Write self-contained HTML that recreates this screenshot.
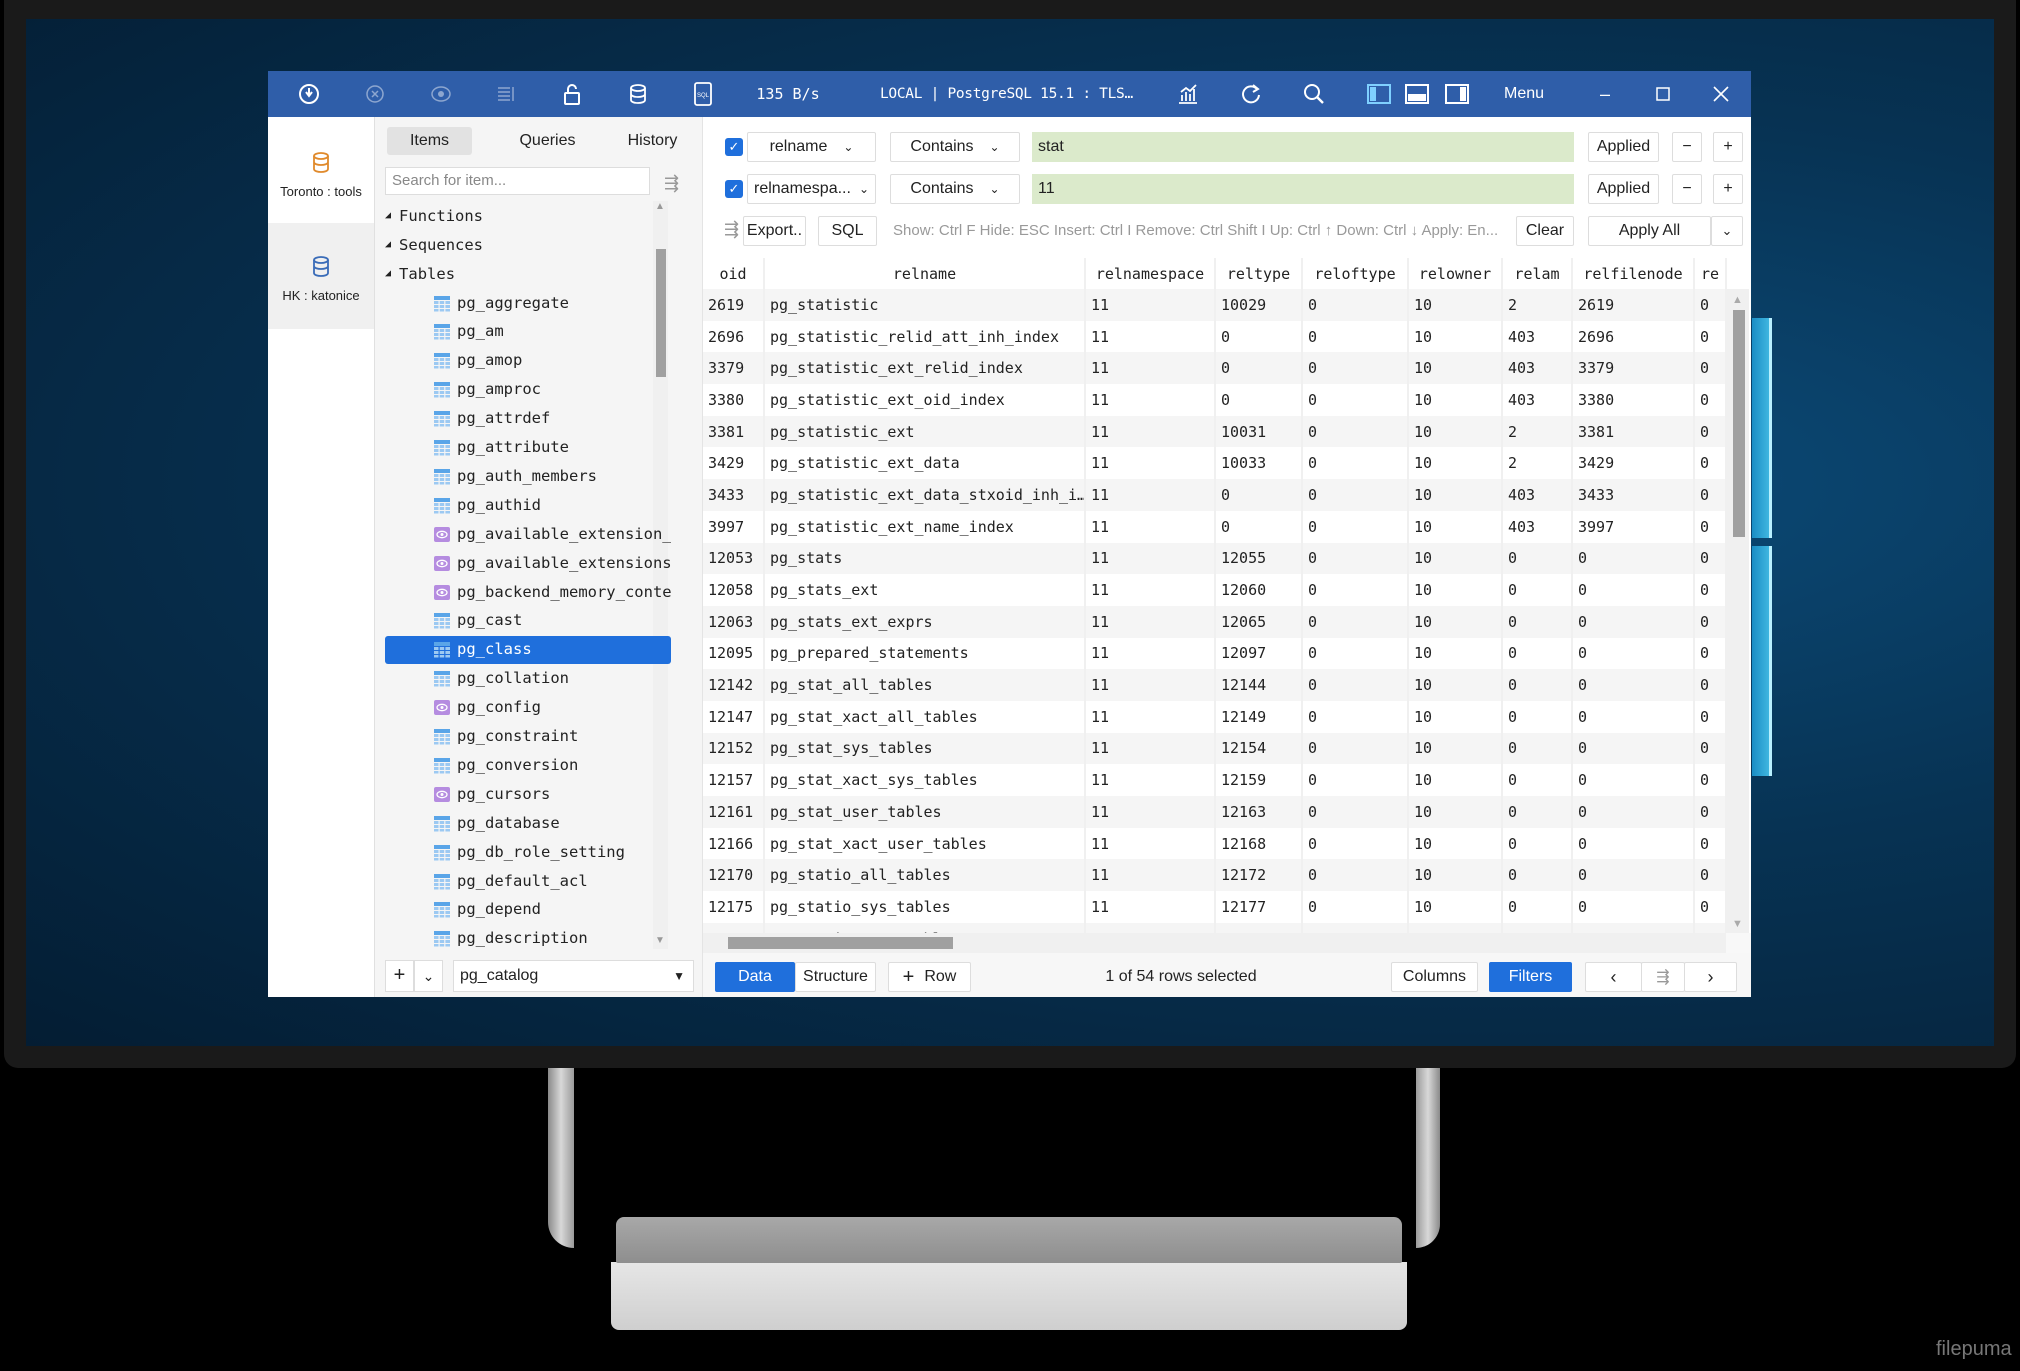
<!DOCTYPE html>
<html><head><meta charset="utf-8">
<style>
*{box-sizing:border-box;margin:0;padding:0}
body{width:2020px;height:1371px;background:#000;position:relative;overflow:hidden;font-family:"Liberation Sans","DejaVu Sans",sans-serif;color:#222}
.a{position:absolute}
.mono{font-family:"DejaVu Sans Mono","Liberation Mono",monospace}
.btn{position:absolute;background:#fff;border:1px solid #ddd;border-radius:2px;display:flex;align-items:center;justify-content:center;font-size:16px;color:#222;white-space:nowrap}
.ti{position:absolute;top:0;height:46px;display:flex;align-items:center;justify-content:center;color:#fff;white-space:nowrap}
.tree{position:absolute;left:0;font-size:15.5px;height:29px;display:flex;align-items:center;white-space:nowrap}
.ico{width:18px;height:18px;margin-right:6px;display:inline-block}
table{border-collapse:collapse;table-layout:fixed;font-family:"DejaVu Sans Mono","Liberation Mono",monospace;font-size:15px}
td,th{height:31.7px;padding:0 5px;white-space:nowrap;overflow:hidden;text-align:left;border-right:2px solid #f0f0f0;font-weight:normal}
th{height:31px;background:#fff;text-align:center}
tbody tr:nth-child(odd) td{background:#f5f5f5}
tbody tr:nth-child(even) td{background:#fff}
</style></head><body>
<!-- monitor -->
<div class="a" style="left:4px;top:0;width:2012px;height:1068px;background:#1a1a1a;border-radius:0 0 14px 14px"></div>
<div class="a" style="left:26px;top:19px;width:1968px;height:1027px;background:radial-gradient(ellipse at 75% 45%,#0c4c7a 0%,#073354 45%,#041d33 100%)"></div>
<div class="a" style="left:1752px;top:318px;width:20px;height:220px;background:linear-gradient(90deg,#1a8cc4,#3fb6e0);border-right:3px solid #b8f0ff"></div>
<div class="a" style="left:1752px;top:546px;width:20px;height:230px;background:linear-gradient(90deg,#1a8cc4,#3fb6e0);border-right:3px solid #b8f0ff"></div>
<!-- stand -->
<div class="a" style="left:548px;top:1068px;width:26px;height:180px;background:linear-gradient(90deg,#8a8a8a,#d8d8d8,#9a9a9a);border-radius:0 0 0 30px"></div>
<div class="a" style="left:1416px;top:1068px;width:24px;height:180px;background:linear-gradient(90deg,#9a9a9a,#d8d8d8,#8a8a8a);border-radius:0 0 30px 0"></div>
<div class="a" style="left:611px;top:1262px;width:796px;height:68px;background:linear-gradient(180deg,#e6e6e6,#cfcfcf);border-radius:0 0 8px 8px"></div>
<div class="a" style="left:616px;top:1217px;width:786px;height:46px;background:linear-gradient(180deg,#a8a8a8,#8e8e8e);border-radius:8px 8px 2px 2px"></div>
<div class="a" style="left:1936px;top:1338px;color:#777;font-size:20px">filepuma</div>

<!-- window -->
<div class="a" style="left:268px;top:71px;width:1483px;height:926px;background:#fff;overflow:hidden">
 <div class="a" style="left:0;top:0;width:1483px;height:46px;background:#2f5ea9"></div>
 <div class="ti" style="left:24px;width:34px"><svg width="22" height="22" viewBox="0 0 22 22"><circle cx="11" cy="11" r="9" fill="none" stroke="#fff" stroke-width="2"/><path d="M11 5v8M8 9l3 4 3-4" stroke="#fff" stroke-width="2" fill="none"/></svg></div>
 <div class="ti" style="left:90px;width:34px;opacity:.45"><svg width="20" height="20"><circle cx="10" cy="10" r="8" fill="none" stroke="#fff" stroke-width="1.5"/><path d="M7 7l6 6M13 7l-6 6" stroke="#fff" stroke-width="1.5"/></svg></div>
 <div class="ti" style="left:156px;width:34px;opacity:.45"><svg width="22" height="20"><ellipse cx="11" cy="10" rx="9" ry="7" fill="none" stroke="#fff" stroke-width="1.5"/><circle cx="11" cy="10" r="3" fill="#fff"/></svg></div>
 <div class="ti" style="left:221px;width:34px;opacity:.45"><svg width="20" height="20"><path d="M2 4h12M2 8h12M2 12h12M2 16h12M17 3v14" stroke="#fff" stroke-width="1.5"/></svg></div>
 <div class="ti" style="left:287px;width:34px"><svg width="18" height="22"><rect x="2" y="10" width="14" height="11" rx="1" fill="none" stroke="#fff" stroke-width="2"/><path d="M5 10V6a4 4 0 0 1 8 0" fill="none" stroke="#fff" stroke-width="2"/></svg></div>
 <div class="ti" style="left:353px;width:34px"><svg width="20" height="22"><ellipse cx="10" cy="5" rx="7" ry="3" fill="none" stroke="#fff" stroke-width="1.8"/><path d="M3 5v12c0 4 14 4 14 0V5M3 11c0 4 14 4 14 0" fill="none" stroke="#fff" stroke-width="1.8"/></svg></div>
 <div class="ti" style="left:418px;width:34px"><svg width="18" height="24"><rect x="1" y="1" width="16" height="22" rx="2" fill="none" stroke="#fff" stroke-width="1.8"/><text x="9" y="15" font-size="6" fill="#fff" text-anchor="middle" font-family="Liberation Sans">SQL</text></svg></div>
 <div class="ti mono" style="left:480px;width:80px;font-size:15px">135 B/s</div>
 <div class="ti mono" style="left:612px;width:280px;font-size:14.5px;justify-content:flex-start;letter-spacing:-0.3px">LOCAL | PostgreSQL 15.1 : TLS…</div>
 <div class="ti" style="left:903px;width:34px"><svg width="22" height="22"><path d="M2 20h18M5 18v-6M9 18v-9M13 18v-7M17 18V6M4 9l5-4 4 3 6-6" stroke="#fff" stroke-width="1.8" fill="none"/></svg></div>
 <div class="ti" style="left:966px;width:34px"><svg width="22" height="22"><path d="M17 6a8 8 0 1 0 2 6" stroke="#fff" stroke-width="2" fill="none"/><path d="M13 2l5 4-5 3" stroke="#fff" stroke-width="2" fill="none"/></svg></div>
 <div class="ti" style="left:1029px;width:34px"><svg width="22" height="22"><circle cx="9" cy="9" r="7" stroke="#fff" stroke-width="2" fill="none"/><path d="M14 14l6 6" stroke="#fff" stroke-width="2.4"/></svg></div>
 <div class="ti" style="left:1096px;width:30px"><svg width="24" height="20"><rect x="1" y="1" width="22" height="18" fill="none" stroke="#7fd0ff" stroke-width="2"/><rect x="3" y="3" width="6" height="14" fill="#7fd0ff"/></svg></div>
 <div class="ti" style="left:1134px;width:30px"><svg width="24" height="20"><rect x="1" y="1" width="22" height="18" fill="none" stroke="#fff" stroke-width="2"/><rect x="3" y="10" width="18" height="7" fill="#fff"/></svg></div>
 <div class="ti" style="left:1174px;width:30px"><svg width="24" height="20"><rect x="1" y="1" width="22" height="18" fill="none" stroke="#fff" stroke-width="2"/><rect x="15" y="3" width="6" height="14" fill="#fff"/></svg></div>
 <div class="ti" style="left:1226px;width:60px;font-size:16px">Menu</div>
 <div class="ti" style="left:1322px;width:30px;font-size:18px">–</div>
 <div class="ti" style="left:1380px;width:30px"><svg width="14" height="14"><rect x="1" y="1" width="12" height="12" fill="none" stroke="#fff" stroke-width="1.5"/></svg></div>
 <div class="ti" style="left:1438px;width:30px"><svg width="16" height="16"><path d="M1 1l14 14M15 1L1 15" stroke="#fff" stroke-width="1.6"/></svg></div>

 <!-- conn sidebar -->
 <div class="a" style="left:0;top:46px;width:107px;height:880px;background:#fff;border-right:1px solid #e0e0e0"></div>
 <div class="a" style="left:0;top:152px;width:106px;height:106px;background:#f0f0f0"></div>
 <div class="a" style="left:0;top:80px;width:106px;text-align:center"><svg width="20" height="24"><ellipse cx="10" cy="5" rx="7" ry="3" fill="none" stroke="#e08a2c" stroke-width="1.8"/><path d="M3 5v13c0 4 14 4 14 0V5M3 11c0 4 14 4 14 0" fill="none" stroke="#e08a2c" stroke-width="1.8"/></svg><div style="font-size:13px;margin-top:4px">Toronto : tools</div></div>
 <div class="a" style="left:0;top:184px;width:106px;text-align:center"><svg width="20" height="24"><ellipse cx="10" cy="5" rx="7" ry="3" fill="none" stroke="#3a6cb8" stroke-width="1.8"/><path d="M3 5v13c0 4 14 4 14 0V5M3 11c0 4 14 4 14 0" fill="none" stroke="#3a6cb8" stroke-width="1.8"/></svg><div style="font-size:13px;margin-top:4px">HK : katonice</div></div>

 <!-- panel -->
 <div class="a" style="left:107px;top:46px;width:328px;height:880px;background:#f5f5f5;border-right:1px solid #e4e4e4">
  <div class="a" style="left:12px;top:10px;width:85px;height:28px;background:#e2e2e2;border-radius:3px;font-size:16px;display:flex;align-items:center;justify-content:center">Items</div>
  <div class="a" style="left:130px;top:10px;width:85px;height:28px;font-size:16px;display:flex;align-items:center;justify-content:center">Queries</div>
  <div class="a" style="left:235px;top:10px;width:85px;height:28px;font-size:16px;display:flex;align-items:center;justify-content:center">History</div>
  <div class="a" style="left:10px;top:50px;width:265px;height:28px;background:#fff;border:1px solid #ddd;font-size:15px;color:#888;padding-left:6px;line-height:26px">Search for item...</div>
  <div class="a" style="left:289px;top:56px;color:#999;font-size:18px">⇶</div>
  <div class="a" style="left:10px;top:84px;width:290px;height:748px;overflow:hidden">
   <div class="tree mono" style="top:0"><span style="font-size:10px;margin-right:8px">◢</span>Functions</div>
   <div class="tree mono" style="top:29px"><span style="font-size:10px;margin-right:8px">◢</span>Sequences</div>
   <div class="tree mono" style="top:58px"><span style="font-size:10px;margin-right:8px">◢</span>Tables</div>
  </div>
  <div class="a" style="left:278px;top:84px;width:15px;height:748px;background:#f0f0f0"></div>
  <div class="a" style="left:281px;top:132px;width:10px;height:128px;background:#a0a0a0"></div>
  <div class="a" style="left:280px;top:84px;font-size:10px;color:#999">▲</div>
  <div class="a" style="left:280px;top:818px;font-size:10px;color:#999">▼</div>
  <div class="a" style="left:10px;top:843px;width:29px;height:32px;background:#fff;border:1px solid #ddd;font-size:20px;text-align:center;line-height:28px">+</div>
  <div class="a" style="left:39px;top:843px;width:29px;height:32px;background:#fff;border:1px solid #ddd;font-size:14px;text-align:center;line-height:30px">⌄</div>
  <div class="a" style="left:78px;top:843px;width:241px;height:32px;background:#fff;border:1px solid #ddd;font-size:16px;padding-left:6px;line-height:30px">pg_catalog<span style="position:absolute;right:8px;font-size:12px">▼</span></div>
 </div>
 <div id="tree" class="a" style="left:117px;top:217px;width:286px;height:663px;overflow:hidden"></div>

 <!-- filters -->
 <div class="a" style="left:457px;top:67px;width:18px;height:18px;background:#1f6fdc;border-radius:3px;color:#fff;font-size:13px;text-align:center;line-height:18px">✓</div>
 <div class="btn" style="left:479px;top:61px;width:129px;height:30px">relname<span style="margin-left:16px;font-size:12px">⌄</span></div>
 <div class="btn" style="left:622px;top:61px;width:130px;height:30px">Contains<span style="margin-left:16px;font-size:12px">⌄</span></div>
 <div class="a" style="left:764px;top:61px;width:542px;height:30px;background:#dbeacb;font-size:16px;padding-left:6px;line-height:30px">stat</div>
 <div class="btn" style="left:1320px;top:61px;width:71px;height:30px">Applied</div>
 <div class="btn" style="left:1404px;top:61px;width:30px;height:30px">−</div>
 <div class="btn" style="left:1445px;top:61px;width:30px;height:30px">+</div>

 <div class="a" style="left:457px;top:109px;width:18px;height:18px;background:#1f6fdc;border-radius:3px;color:#fff;font-size:13px;text-align:center;line-height:18px">✓</div>
 <div class="btn" style="left:479px;top:103px;width:129px;height:30px">relnamespa...<span style="margin-left:8px;font-size:12px">⌄</span></div>
 <div class="btn" style="left:622px;top:103px;width:130px;height:30px">Contains<span style="margin-left:16px;font-size:12px">⌄</span></div>
 <div class="a" style="left:764px;top:103px;width:542px;height:30px;background:#dbeacb;font-size:16px;padding-left:6px;line-height:30px">11</div>
 <div class="btn" style="left:1320px;top:103px;width:71px;height:30px">Applied</div>
 <div class="btn" style="left:1404px;top:103px;width:30px;height:30px">−</div>
 <div class="btn" style="left:1445px;top:103px;width:30px;height:30px">+</div>

 <div class="a" style="left:456px;top:148px;color:#999;font-size:18px">⇶</div>
 <div class="btn" style="left:475px;top:145px;width:63px;height:30px">Export..</div>
 <div class="btn" style="left:550px;top:145px;width:59px;height:30px">SQL</div>
 <div class="a" style="left:625px;top:145px;width:612px;height:30px;line-height:30px;font-size:15px;color:#999;white-space:nowrap;overflow:hidden">Show: Ctrl F Hide: ESC Insert: Ctrl I Remove: Ctrl Shift I Up: Ctrl ↑ Down: Ctrl ↓ Apply: En...</div>
 <div class="btn" style="left:1248px;top:145px;width:58px;height:30px">Clear</div>
 <div class="btn" style="left:1320px;top:145px;width:123px;height:30px">Apply All</div>
 <div class="btn" style="left:1443px;top:145px;width:32px;height:30px;font-size:13px">⌄</div>

 <!-- grid -->
 <div class="a" style="left:435px;top:187px;width:1048px;height:675px;overflow:hidden;background:#fff">
 <table style="width:1023px">
 <colgroup><col style="width:61px"><col style="width:321px"><col style="width:130px"><col style="width:87px"><col style="width:106px"><col style="width:94px"><col style="width:70px"><col style="width:122px"><col style="width:32px"></colgroup>
 <thead><tr><th>oid</th><th>relname</th><th>relnamespace</th><th>reltype</th><th>reloftype</th><th>relowner</th><th>relam</th><th>relfilenode</th><th>re</th></tr></thead>
 <tbody>
 <tr><td>2619</td><td>pg_statistic</td><td>11</td><td>10029</td><td>0</td><td>10</td><td>2</td><td>2619</td><td>0</td></tr>
 <tr><td>2696</td><td>pg_statistic_relid_att_inh_index</td><td>11</td><td>0</td><td>0</td><td>10</td><td>403</td><td>2696</td><td>0</td></tr>
 <tr><td>3379</td><td>pg_statistic_ext_relid_index</td><td>11</td><td>0</td><td>0</td><td>10</td><td>403</td><td>3379</td><td>0</td></tr>
 <tr><td>3380</td><td>pg_statistic_ext_oid_index</td><td>11</td><td>0</td><td>0</td><td>10</td><td>403</td><td>3380</td><td>0</td></tr>
 <tr><td>3381</td><td>pg_statistic_ext</td><td>11</td><td>10031</td><td>0</td><td>10</td><td>2</td><td>3381</td><td>0</td></tr>
 <tr><td>3429</td><td>pg_statistic_ext_data</td><td>11</td><td>10033</td><td>0</td><td>10</td><td>2</td><td>3429</td><td>0</td></tr>
 <tr><td>3433</td><td>pg_statistic_ext_data_stxoid_inh_i…</td><td>11</td><td>0</td><td>0</td><td>10</td><td>403</td><td>3433</td><td>0</td></tr>
 <tr><td>3997</td><td>pg_statistic_ext_name_index</td><td>11</td><td>0</td><td>0</td><td>10</td><td>403</td><td>3997</td><td>0</td></tr>
 <tr><td>12053</td><td>pg_stats</td><td>11</td><td>12055</td><td>0</td><td>10</td><td>0</td><td>0</td><td>0</td></tr>
 <tr><td>12058</td><td>pg_stats_ext</td><td>11</td><td>12060</td><td>0</td><td>10</td><td>0</td><td>0</td><td>0</td></tr>
 <tr><td>12063</td><td>pg_stats_ext_exprs</td><td>11</td><td>12065</td><td>0</td><td>10</td><td>0</td><td>0</td><td>0</td></tr>
 <tr><td>12095</td><td>pg_prepared_statements</td><td>11</td><td>12097</td><td>0</td><td>10</td><td>0</td><td>0</td><td>0</td></tr>
 <tr><td>12142</td><td>pg_stat_all_tables</td><td>11</td><td>12144</td><td>0</td><td>10</td><td>0</td><td>0</td><td>0</td></tr>
 <tr><td>12147</td><td>pg_stat_xact_all_tables</td><td>11</td><td>12149</td><td>0</td><td>10</td><td>0</td><td>0</td><td>0</td></tr>
 <tr><td>12152</td><td>pg_stat_sys_tables</td><td>11</td><td>12154</td><td>0</td><td>10</td><td>0</td><td>0</td><td>0</td></tr>
 <tr><td>12157</td><td>pg_stat_xact_sys_tables</td><td>11</td><td>12159</td><td>0</td><td>10</td><td>0</td><td>0</td><td>0</td></tr>
 <tr><td>12161</td><td>pg_stat_user_tables</td><td>11</td><td>12163</td><td>0</td><td>10</td><td>0</td><td>0</td><td>0</td></tr>
 <tr><td>12166</td><td>pg_stat_xact_user_tables</td><td>11</td><td>12168</td><td>0</td><td>10</td><td>0</td><td>0</td><td>0</td></tr>
 <tr><td>12170</td><td>pg_statio_all_tables</td><td>11</td><td>12172</td><td>0</td><td>10</td><td>0</td><td>0</td><td>0</td></tr>
 <tr><td>12175</td><td>pg_statio_sys_tables</td><td>11</td><td>12177</td><td>0</td><td>10</td><td>0</td><td>0</td><td>0</td></tr>
 <tr><td>12179</td><td>pg_statio_user_tables</td><td>11</td><td>12181</td><td>0</td><td>10</td><td>0</td><td>0</td><td>0</td></tr>
 </tbody></table>
 <div class="a" style="left:1023px;top:31px;width:23px;height:645px;background:#f0f0f0"></div>
 <div class="a" style="left:1030px;top:52px;width:12px;height:227px;background:#a0a0a0"></div>
 <div class="a" style="left:1029px;top:36px;font-size:11px;color:#aaa">▲</div>
 <div class="a" style="left:1029px;top:660px;font-size:11px;color:#aaa">▼</div>
 </div>
 <div class="a" style="left:435px;top:862px;width:1023px;height:20px;background:#f0f0f0"></div>
 <div class="a" style="left:460px;top:866px;width:225px;height:12px;background:#a0a0a0"></div>
 <div class="a" style="left:1458px;top:862px;width:25px;height:20px;background:#f8f8f8"></div>

 <!-- bottom bar -->
 <div class="a" style="left:435px;top:882px;width:1048px;height:44px;background:#f7f7f7"></div>
 <div class="btn" style="left:447px;top:891px;width:80px;height:30px;background:#1f6fdc;color:#fff;border-color:#1f6fdc">Data</div>
 <div class="btn" style="left:527px;top:891px;width:81px;height:30px">Structure</div>
 <div class="btn" style="left:620px;top:891px;width:83px;height:30px"><span style="font-size:20px;margin-right:10px">+</span>Row</div>
 <div class="a" style="left:830px;top:891px;width:166px;height:30px;line-height:30px;text-align:center;font-size:16px;white-space:nowrap">1 of 54 rows selected</div>
 <div class="btn" style="left:1123px;top:891px;width:87px;height:30px">Columns</div>
 <div class="btn" style="left:1221px;top:891px;width:83px;height:30px;background:#1f6fdc;color:#fff;border-color:#1f6fdc">Filters</div>
 <div class="btn" style="left:1317px;top:891px;width:57px;height:30px;font-size:18px">‹</div>
 <div class="btn" style="left:1373px;top:891px;width:44px;height:30px;color:#999">⇶</div>
 <div class="btn" style="left:1416px;top:891px;width:53px;height:30px;font-size:18px">›</div>
</div>

<script>
(function(){
var items=[["pg_aggregate",0],["pg_am",0],["pg_amop",0],["pg_amproc",0],["pg_attrdef",0],["pg_attribute",0],["pg_auth_members",0],["pg_authid",0],["pg_available_extension_",1],["pg_available_extensions",1],["pg_backend_memory_conte",1],["pg_cast",0],["pg_class",2],["pg_collation",0],["pg_config",1],["pg_constraint",0],["pg_conversion",0],["pg_cursors",1],["pg_database",0],["pg_db_role_setting",0],["pg_default_acl",0],["pg_depend",0],["pg_description",0]];
var t=document.getElementById('tree'),h='';
var tbl='<svg class="ico" viewBox="0 0 18 18"><rect x="1" y="2" width="16" height="4" fill="#5aa5e8"/><g fill="#9cc9f2"><rect x="1" y="7" width="4.5" height="3"/><rect x="6.7" y="7" width="4.5" height="3"/><rect x="12.4" y="7" width="4.6" height="3"/><rect x="1" y="11" width="4.5" height="3"/><rect x="6.7" y="11" width="4.5" height="3"/><rect x="12.4" y="11" width="4.6" height="3"/><rect x="1" y="15" width="4.5" height="2.5"/><rect x="6.7" y="15" width="4.5" height="2.5"/><rect x="12.4" y="15" width="4.6" height="2.5"/></g></svg>';
var vw='<svg class="ico" viewBox="0 0 18 18"><rect x="1" y="2" width="16" height="15" rx="2" fill="#b58ce0"/><ellipse cx="9" cy="9.5" rx="5" ry="3.2" fill="none" stroke="#fff" stroke-width="1.3"/><circle cx="9" cy="9.5" r="1.5" fill="#fff"/></svg>';
items.forEach(function(it,i){
 var top=i*28.9;
 if(it[1]==2){h+='<div class="a" style="left:0;top:'+(top+1)+'px;width:286px;height:28px;background:#1f6fdc;border-radius:3px"></div>';}
 h+='<div class="tree mono" style="left:48px;top:'+top+'px;'+(it[1]==2?'color:#fff':'')+'">'+(it[1]==1?vw:tbl)+it[0]+'</div>';
});
t.innerHTML=h;
})();
</script>
</body></html>
